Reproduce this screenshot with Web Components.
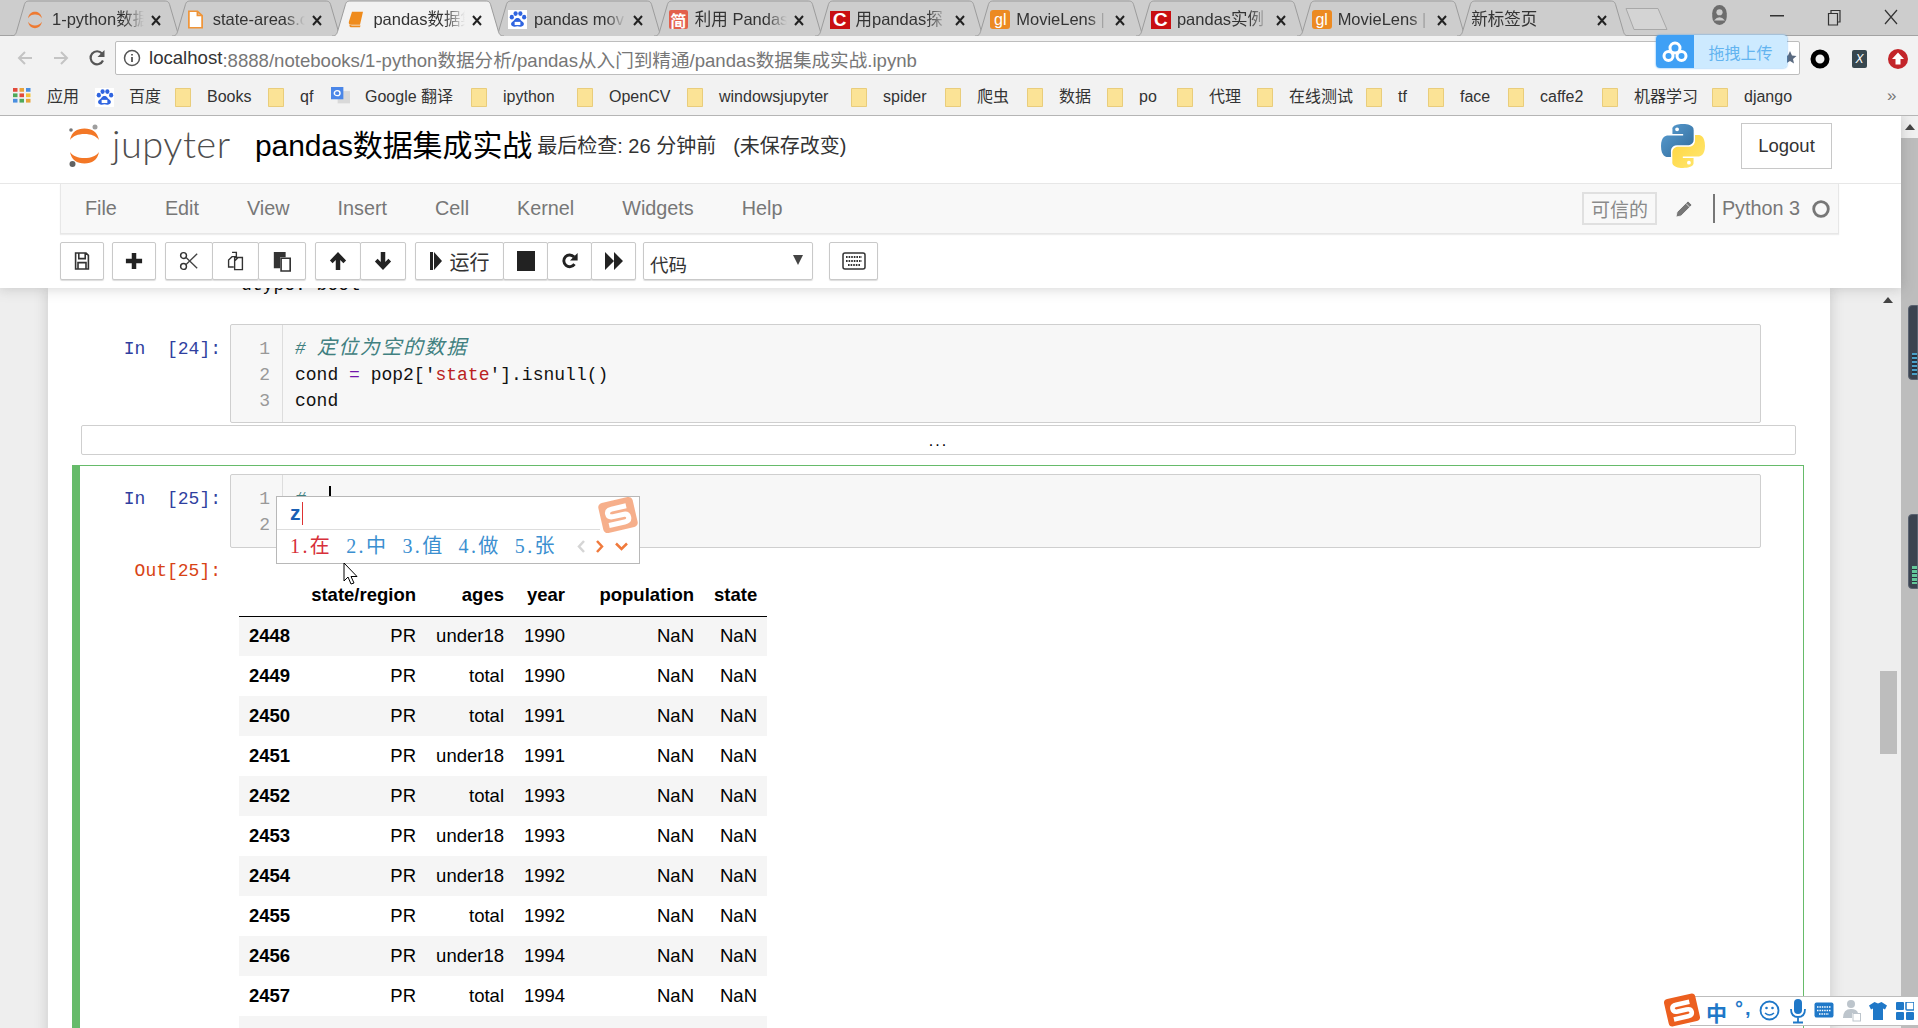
<!DOCTYPE html>
<html lang="zh"><head><meta charset="utf-8"><title>pandas数据集成实战</title>
<style>
html,body{margin:0;padding:0;background:#fff}
body{position:relative;width:1918px;height:1028px;overflow:hidden;font-family:"Liberation Sans","Noto Sans CJK SC",sans-serif;color:#000}
</style></head><body>
<c-tabs>
<c-tab icon="jup" label="1-python数据"></c-tab>
<c-tab icon="doc" label="state-areas.c"></c-tab>
<c-tab icon="book" label="pandas数据集" active></c-tab>
<c-tab icon="baidu" label="pandas mov"></c-tab>
<c-tab icon="jian" label="利用 Pandas"></c-tab>
<c-tab icon="csdn" label="用pandas探"></c-tab>
<c-tab icon="gl" label="MovieLens |"></c-tab>
<c-tab icon="csdn" label="pandas实例"></c-tab>
<c-tab icon="gl" label="MovieLens |"></c-tab>
<c-tab label="新标签页"></c-tab>
</c-tabs>
<c-toolbar></c-toolbar>
<c-bookmarks>
<c-bm w="82" icon="apps">应用</c-bm><c-bm w="80" icon="baidu">百度</c-bm><c-bm w="93">Books</c-bm><c-bm w="63">qf</c-bm><c-bm w="140" icon="gt">Google 翻译</c-bm><c-bm w="106">ipython</c-bm><c-bm w="110">OpenCV</c-bm><c-bm w="164">windowsjupyter</c-bm><c-bm w="94">spider</c-bm><c-bm w="82">爬虫</c-bm><c-bm w="80">数据</c-bm><c-bm w="70">po</c-bm><c-bm w="80">代理</c-bm><c-bm w="109">在线测试</c-bm><c-bm w="62">tf</c-bm><c-bm w="80">face</c-bm><c-bm w="94">caffe2</c-bm><c-bm w="110">机器学习</c-bm><c-bm w="179">django</c-bm><span style="color:#777;font-size:17px">»</span>
</c-bookmarks>
<nb-page>
<nb-header></nb-header>
<nb-scroll>
<nb-cell n="24" style="height:99px">
<code-line>1|<i class="c">#</i> <i class="c z">定位为空的数据</i></code-line>
<code-line>2|cond <b class="o">=</b> pop2['<b class="s">state</b>'].isnull()</code-line>
<code-line>3|cond</code-line>
</nb-cell>
<nb-ellipsis>...</nb-ellipsis>
<nb-cell n="25" selected>
<code-line>1|<i class="c">#</i></code-line>
<code-line>2|</code-line>
<nb-table slot="output"></nb-table>
</nb-cell>
</nb-scroll>
</nb-page>
<ime-popup></ime-popup>
<ime-bar></ime-bar>
<mouse-arrow></mouse-arrow>
<script>
const SANS='"Liberation Sans","Noto Sans CJK SC",sans-serif';
const MONO='"Liberation Mono","Noto Sans CJK SC",monospace';
const sLogo=(c,w,h)=>`<svg width="${w}" height="${h}" viewBox="0 0 40 36"><g transform="rotate(-13 20 18)"><rect x="4" y="4" width="32" height="28" rx="4" fill="${c}"/><path d="M29 11.500H15.500Q11 11.500 11 15T15.500 18.500H24.500Q29 18.500 29 22T24.500 25.500H10" stroke="#fff" stroke-width="4.600" fill="none"/></g></svg>`;
const IC={
jup:`<svg viewBox="0 0 18 22" width="18" height="20" preserveAspectRatio="none"><path d="M2 9C3 4 6 2 9 2s6 2 7 7C14 6 12 5 9 5S4 6 2 9ZM2 13c1 5 4 7 7 7s6-2 7-7c-2 3-4 4-7 4s-5-1-7-4Z" fill="#ee7a32"/></svg>`,
doc:`<svg viewBox="0 0 18 24" width="17" height="19" preserveAspectRatio="none"><path d="M2 1.500H11L16 7V22.500H2ZM11 1.500V7H16" fill="#fff" stroke="#f09436" stroke-width="1.800"/></svg>`,
book:`<svg viewBox="0 0 18 22" width="18" height="19" preserveAspectRatio="none"><path d="M5 2H16L13 17H4Q1 17 2 13ZM2.500 17Q2 20 5 20H13L13.500 18H5" fill="#ef8b1c"/></svg>`,
baidu:`<svg viewBox="0 0 20 24" width="19" height="19" preserveAspectRatio="none"><rect width="20" height="24" fill="#fff"/><g fill="#2f64e0"><ellipse cx="4" cy="9" rx="2.200" ry="3"/><ellipse cx="8" cy="4.500" rx="2.200" ry="3"/><ellipse cx="13" cy="4.500" rx="2.200" ry="3"/><ellipse cx="17" cy="9" rx="2.200" ry="3"/><path d="M10 10c3 0 3 3 5 4.500 3 2 2 6.500-2 6.500-1 0-2-.5-3-.5s-2 .5-3 .5c-4 0-5-4.500-2-6.500 2-1.500 2-4.500 5-4.500Z"/></g><rect x="7" y="15" width="6" height="4" fill="#fff"/></svg>`,
jian:`<span style="display:flex;width:19px;height:19px;background:#e2604c;border-radius:2px;color:#fff;font:bold 16px 'Noto Sans CJK SC',sans-serif;align-items:center;justify-content:center">简</span>`,
csdn:`<span style="display:flex;width:20px;height:18px;margin-top:1px;background:#c90f12;color:#fff;font:bold 19px 'Liberation Sans',sans-serif;align-items:center;justify-content:center">C</span>`,
gl:`<span style="display:flex;width:20px;height:19px;background:#ec8a22;border-radius:3px;color:#fff;font:16px 'Liberation Sans',sans-serif;align-items:center;justify-content:center">gl</span>`,
apps:`<svg viewBox="0 0 18 18" width="18" height="15" preserveAspectRatio="none" style="margin-top:-4px"><g><rect width="4.500" height="4.500" fill="#e24a3b"/><rect x="6.500" width="4.500" height="4.500" fill="#e8a33a"/><rect x="13" width="4.500" height="4.500" fill="#4a8fe0"/><rect y="6.500" width="4.500" height="4.500" fill="#4fa95a"/><rect x="6.500" y="6.500" width="4.500" height="4.500" fill="#e24a3b"/><rect x="13" y="6.500" width="4.500" height="4.500" fill="#f2c33b"/><rect y="13" width="4.500" height="4.500" fill="#4a8fe0"/><rect x="6.500" y="13" width="4.500" height="4.500" fill="#4fa95a"/><rect x="13" y="13" width="4.500" height="4.500" fill="#e8a33a"/></g></svg>`,
gt:`<svg viewBox="0 0 20 22" width="19" height="18" preserveAspectRatio="none" style="margin-top:-3px"><rect x="7" y="5" width="13" height="15" fill="#d9d9d9"/><rect width="13" height="15" fill="#4a86e8"/><circle cx="6.500" cy="7.500" r="3" fill="none" stroke="#fff" stroke-width="1.500"/></svg>`,
folder:`<svg viewBox="0 0 16 20" width="16" height="19" preserveAspectRatio="none"><path d="M.5.5H15.500V19.500H.5Z" fill="#fbe396" stroke="#e8cc78"/></svg>`,
save:`<svg viewBox="0 0 20 24" width="16" height="20"><path d="M2 2H15L18 5V22H2Z M6 2V9H14V2 M5 22V14H15V22" fill="none" stroke="#333" stroke-width="2"/></svg>`,
plus:`<svg viewBox="0 0 20 20" width="18" height="18"><path d="M7.500 1H12.500V7.500H19V12.500H12.500V19H7.500V12.500H1V7.500H7.500Z" fill="#222"/></svg>`,
cut:`<svg viewBox="0 0 22 24" width="20" height="22"><circle cx="5" cy="6" r="3.200" fill="none" stroke="#333" stroke-width="1.600"/><circle cx="5" cy="18" r="3.200" fill="none" stroke="#333" stroke-width="1.600"/><path d="M7.500 8L20 20M7.500 16L20 4" stroke="#444" stroke-width="1.500"/></svg>`,
copy:`<svg viewBox="0 0 22 24" width="19" height="22"><path d="M7 2H12V7H7L3 11V19H9M12 2V6" fill="none" stroke="#333" stroke-width="1.600"/><path d="M10 8H19V22H10Z M10 12L14 8" fill="#fff" stroke="#333" stroke-width="1.600"/></svg>`,
paste:`<svg viewBox="0 0 22 24" width="20" height="22"><path d="M2 2H15V8H9V20H2Z" fill="#333"/><path d="M10 9H20V23H10Z" fill="#fff" stroke="#333" stroke-width="1.800"/></svg>`,
up:`<svg viewBox="0 0 20 22" width="18" height="20"><path d="M10 1L19 10.500L16 13.500L12.500 10V21H7.500V10L4 13.500L1 10.500Z" fill="#222"/></svg>`,
down:`<svg viewBox="0 0 20 22" width="18" height="20"><path d="M10 21L19 11.500L16 8.500L12.500 12V1H7.500V12L4 8.500L1 11.500Z" fill="#222"/></svg>`,
step:`<svg viewBox="0 0 12 20" width="12" height="20"><path d="M0 1H3V19H0ZM4 1L12 10L4 19Z" fill="#222"/></svg>`,
stop:`<svg viewBox="0 0 18 20" width="18" height="20"><rect width="18" height="20" fill="#222"/></svg>`,
redo:`<svg viewBox="0 0 20 20" width="18" height="18"><path d="M15 13.500A6.500 6.500 0 1 1 14.500 5.500" fill="none" stroke="#222" stroke-width="3.200"/><path d="M18.500 1V9.500H10Z" fill="#222"/></svg>`,
ff:`<svg viewBox="0 0 18 20" width="18" height="20"><path d="M0 1L9 10L0 19ZM9 1L18 10L9 19Z" fill="#222"/></svg>`,
kbd:`<svg viewBox="0 0 24 18" width="24" height="18"><rect x="1" y="1" width="22" height="16" rx="2" fill="#fff" stroke="#333" stroke-width="1.500"/><path d="M4 5H20M4 9H20M6 13H18" stroke="#333" stroke-width="2" stroke-dasharray="1.600 1"/></svg>`
};
function def(name,css,html){customElements.define(name,class extends HTMLElement{connectedCallback(){if(this.shadowRoot)return;const s=this.attachShadow({mode:'open'});s.innerHTML=`<style>${css}</style>`+(typeof html==='function'?html(this):html)}})}

def('c-tabs',`:host{display:flex;height:36px;background:#cdcdcd;padding-left:11px;box-sizing:border-box;position:relative}
.line{position:absolute;left:0;right:0;bottom:0;height:1px;background:#a3a3a3}
.new{position:absolute;left:1625px;top:7px}`,
`<div class="line"></div><slot></slot>
<svg class="new" width="45" height="24" viewBox="0 0 45 24"><path d="M1 1.500H33L42 22.500H9Z" fill="#d4d4d4" stroke="#a8a8a8"/></svg>
<svg style="position:absolute;left:1711px;top:5px" width="17" height="20" viewBox="0 0 18 22"><path d="M9 0A8 9 0 0 1 17 9V13A8 9 0 0 1 1 13V9A8 9 0 0 1 9 0Z" fill="#6d6d6d"/><circle cx="9" cy="8" r="3.400" fill="#cdcdcd"/><path d="M3 17Q9 10 15 17Z" fill="#cdcdcd"/></svg>
<svg style="position:absolute;left:1770px;top:15px" width="14" height="2"><rect width="14" height="1.500" fill="#333"/></svg>
<svg style="position:absolute;left:1827px;top:9px" width="14" height="17" viewBox="0 0 14 17"><path d="M1.500 4.500H10.500V16H1.500ZM4 4.500V1.500H13V13H10.500" fill="none" stroke="#333" stroke-width="1.200"/></svg>
<svg style="position:absolute;left:1884px;top:9px" width="14" height="16" viewBox="0 0 14 16"><path d="M1 1L13 15M13 1L1 15" stroke="#333" stroke-width="1.200"/></svg>`);

def('c-tab',`:host{display:block;position:relative;width:172px;height:36px;margin-right:-11.300px;flex:none}
:host([active]){z-index:3}
svg.bg{position:absolute;left:0;top:0}
.ic{position:absolute;left:15px;top:10px;display:flex}
.lb{position:absolute;left:41px;top:0;width:92px;height:35px;line-height:38px;font-size:16.500px;color:#333;white-space:nowrap;overflow:hidden;-webkit-mask-image:linear-gradient(90deg,#000 78%,transparent)}
.x{position:absolute;left:140px;top:15px}`,
t=>{const a=t.hasAttribute('active'),i=t.getAttribute('icon');return `<svg class="bg" width="172" height="36"><path d="M0 36C4 36 5 34 6 30L13 6C14 2 15 1 19 1H153C157 1 158 2 159 6L166 30C167 34 168 36 172 36" fill="${a?'#f2f2f2':'#cdcdcd'}" stroke="#9c9c9c"/></svg>
${i?`<span class="ic">${IC[i]}</span>`:''}<span class="lb" style="${i?'':'left:14px'}">${t.getAttribute('label')}</span>
<svg class="x" width="10" height="11" viewBox="0 0 10 11"><path d="M1 1L9 10M9 1L1 10" stroke="#222" stroke-width="2"/></svg>`});

def('c-toolbar',`:host{display:flex;align-items:flex-start;height:46px;background:#f2f2f2;position:relative;box-sizing:border-box;padding:5px 0 0 16px}
.nav{display:flex;align-items:center;gap:18px;height:34px;width:99px;flex:none}
.omni{box-sizing:border-box;width:1685px;height:34px;background:#fff;border:1px solid #bdbdbd;border-radius:2px;display:flex;align-items:center;padding-left:7px;font-size:18.600px;color:#777;white-space:nowrap}
.omni b{font-weight:400;color:#333}
.info{margin-right:8px;display:flex}
.ex{position:absolute;top:14px}
.pan{position:absolute;left:1656px;top:-1px;width:131px;height:33px;border-radius:4px;display:flex;overflow:hidden;box-shadow:0 0 2px #3fa0f5;z-index:2}
.pan .l{width:38px;background:#3fa0f5;display:flex;align-items:center;justify-content:center}
.pan .r{flex:1;background:#cdeaff;color:#63b4f0;font-size:16px;display:flex;align-items:center;justify-content:center}`,
`<div class="nav">
<svg width="18" height="18" viewBox="0 0 18 18"><path d="M16 9H3M9 3L3 9L9 15" fill="none" stroke="#c4c4c4" stroke-width="2"/></svg>
<svg width="18" height="18" viewBox="0 0 18 18"><path d="M2 9H15M9 3L15 9L9 15" fill="none" stroke="#c4c4c4" stroke-width="2"/></svg>
<svg width="18" height="18" viewBox="0 0 18 18"><path d="M15 11.500A6.500 6.500 0 1 1 14 4.500" fill="none" stroke="#555" stroke-width="2.200"/><path d="M16.500 1V8H9.500Z" fill="#555"/></svg>
</div>
<div class="omni"><span class="info"><svg width="18" height="18" viewBox="0 0 18 18"><circle cx="9" cy="9" r="7.500" fill="none" stroke="#555" stroke-width="1.500"/><path d="M9 8V13M9 5V6.500" stroke="#555" stroke-width="1.800"/></svg></span><b>localhost</b>:8888/notebooks/1-python数据分析/pandas从入门到精通/pandas数据集成实战.ipynb</div>
<svg class="ex" style="left:1783px" width="14" height="14" viewBox="0 0 14 14"><path d="M7 1L9 5.500L13.500 6L10 9L11 13.500L7 11L3 13.500L4 9L.5 6L5 5.500Z" fill="#5a6a80"/></svg>
<svg class="ex" style="left:1810px;top:13px" width="20" height="20"><circle cx="10" cy="10" r="7" fill="none" stroke="#000" stroke-width="5"/></svg>
<span class="ex" style="left:1852px;top:14px;width:15px;height:18px;background:#37474f;border-radius:2px;color:#fff;font-size:12px;text-align:center;line-height:18px;font-style:italic">X</span>
<svg class="ex" style="left:1888px;top:13px" width="20" height="20" viewBox="0 0 20 20"><circle cx="10" cy="10" r="10" fill="#c3252a"/><path d="M10 3.500L16 10H12.500V15.500H7.500V10H4Z" fill="#fff"/></svg>
<div class="pan"><span class="l"><svg width="26" height="22" viewBox="0 0 26 22"><g fill="none" stroke="#fff" stroke-width="3"><circle cx="13" cy="7" r="5"/><circle cx="6.500" cy="15" r="4.500"/><circle cx="19.500" cy="15" r="4.500"/></g></svg></span><span class="r">拖拽上传</span></div>`);

def('c-bookmarks',`:host{display:flex;align-items:center;height:34px;box-sizing:border-box;background:#f2f2f2;border-bottom:1px solid #b5b5b5;padding:0 0 2px 13px;position:relative}
::slotted(span){position:absolute;left:1887px;top:4px}`,`<slot></slot>`);
def('c-bm',`:host{display:flex;align-items:center;flex:none;height:26px;font-size:16px;line-height:24px;color:#333;white-space:nowrap}
.i{width:32px;flex:none;display:flex;align-items:center}
.t{display:block;margin-top:-2px}`,
t=>{t.style.width=t.getAttribute('w')+'px';return `<span class="i" style="${t.getAttribute('icon')?'width:34px':''}">${IC[t.getAttribute('icon')||'folder']}</span><span class="t"><slot></slot></span>`});

def('nb-page',`:host{display:grid;grid-template-columns:1901px 17px;grid-template-rows:172px 740px;height:912px;position:relative;overflow:hidden}
.sb{grid-column:2;grid-row:1/3;background:#bdbdbd;position:relative}
.tp{height:22px;background:#f1f1f1;display:flex;align-items:center;justify-content:center}
.m{position:absolute;left:7px;width:10px;height:75px;box-sizing:border-box;border-radius:4px 0 0 4px;background:#3b4350;border:1px solid #5a6270}
.m i{position:absolute;left:3px;right:0;bottom:4px;height:22px;background:repeating-linear-gradient(#4aa0c8 0 2px,#27303c 2px 4px)}
.m.g i{height:18px;background:repeating-linear-gradient(#63c79a 0 3px,#27303c 3px 4px)}`,
`<slot></slot><div class="sb"><div class="tp"><svg width="10" height="6"><path d="M5 0L10 6H0Z" fill="#444"/></svg></div><div class="m" style="top:189px"><i></i></div><div class="m g" style="top:398px"><i></i></div></div>`);

def('nb-header',`:host{display:block;grid-column:1;grid-row:1;background:#fff;position:relative;z-index:3;box-shadow:0 0 12px 1px rgba(87,87,87,.25);font-family:${SANS}}
.top{height:68px;display:flex;align-items:center;padding:0 69px 8px 68px;border-bottom:1px solid #e7e7e7;box-sizing:border-box}
.jt{font:300 38px Lato,sans-serif;color:#4e4e4e;margin:0 0 6px 11px;width:143px;flex:none;letter-spacing:.5px}
.title{font-size:30px;color:#000;white-space:nowrap;margin-bottom:5px;letter-spacing:-.1px}
.ck{font-size:20px;color:#333;margin:0 0 3px 5px;white-space:nowrap}
.ck span{margin-left:17px}
.sp{flex:1}
.logout{box-sizing:border-box;width:91px;height:46px;border:1.500px solid #c8c8c8;margin-left:36px;display:flex;align-items:center;justify-content:center;font-size:18.500px;color:#333}
.menu{margin:0 62px 0 60px;height:50px;box-sizing:border-box;background:#f8f8f8;border:1px solid #e7e7e7;border-top:0;display:flex;align-items:center;font-size:19.800px;color:#777;position:relative;box-shadow:0 1px 1px #eee}
.menu .it{padding:0 24px}
.trust{box-sizing:border-box;height:33px;width:75px;border:2px solid #e0e0e0;display:flex;align-items:center;justify-content:center;font-size:19px;color:#8a8a8a;margin-right:18px}
.tb{display:flex;padding:8px 0 0 60px;height:54px;box-sizing:border-box;align-items:flex-start}
.g{display:flex;margin-right:var(--m,9px)}
.b{box-sizing:border-box;height:38px;border:1.500px solid #c9c9c9;background:#fff;display:flex;align-items:center;justify-content:center;color:#333;font-size:20px;margin-right:-1px;box-shadow:0 1px 1px #ddd;border-radius:2px}
.b span{margin-left:8px}
.sel{box-sizing:border-box;width:170px;height:38px;border:1.500px solid #c9c9c9;border-radius:2px;display:flex;align-items:center;justify-content:space-between;padding:5px 9px 0 6px;font-size:18.500px;color:#333;margin-right:16px;box-shadow:0 1px 1px #ddd}
.sel svg{margin-top:-7px}`,
`<div class="top">
<svg width="33" height="44" viewBox="0 0 33 44" style="flex:none"><path d="M2 16C3.500 8 9 4.500 16.500 4.500S29.500 8 31 16C28 12 23 10 16.500 10S5 12 2 16ZM2 28C3.500 36 9 39.500 16.500 39.500S29.500 36 31 28C28 32 23 34 16.500 34S5 32 2 28Z" fill="#f37726"/><circle cx="3" cy="6" r="1.800" fill="#767677"/><circle cx="27" cy="3" r="2.500" fill="#9e9e9e"/><circle cx="4.500" cy="40" r="3" fill="#616262"/></svg>
<span class="jt">jupyter</span><span class="title">pandas数据集成实战</span><span class="ck">最后检查: 26 分钟前<span>(未保存改变)</span></span><span class="sp"></span>
<svg width="44" height="44" viewBox="0 0 110 110" style="flex:none"><defs><linearGradient id="a" x1="0" y1="0" x2="1" y2="1"><stop offset="0" stop-color="#5a9fd4"/><stop offset="1" stop-color="#306998"/></linearGradient><linearGradient id="b" x1="0" y1="0" x2="1" y2="1"><stop offset="0" stop-color="#ffe873"/><stop offset="1" stop-color="#ffd43b"/></linearGradient></defs><path fill="url(#a)" d="M54.900 0C26.800 0 28.600 12.200 28.600 12.200V24.800H55.400V28.600H17.900S0 26.600 0 54.900S15.600 82.200 15.600 82.200H24.900V69S24.400 53.400 40.300 53.400H66.800S81.700 53.600 81.700 39V14.900S84 0 54.900 0ZM40.200 8.500A4.800 4.800 0 1 1 40.200 18.100A4.800 4.800 0 0 1 40.200 8.500Z" fill-rule="evenodd"/><path fill="url(#b)" transform="rotate(180 55 55)" d="M54.900 0C26.800 0 28.600 12.200 28.600 12.200V24.800H55.400V28.600H17.900S0 26.600 0 54.900S15.600 82.200 15.600 82.200H24.900V69S24.400 53.400 40.300 53.400H66.800S81.700 53.600 81.700 39V14.900S84 0 54.900 0ZM40.200 8.500A4.800 4.800 0 1 1 40.200 18.100A4.800 4.800 0 0 1 40.200 8.500Z" fill-rule="evenodd"/></svg>
<span class="logout">Logout</span></div>
<div class="menu"><span class="it">File</span><span class="it">Edit</span><span class="it">View</span><span class="it">Insert</span><span class="it">Cell</span><span class="it">Kernel</span><span class="it">Widgets</span><span class="it">Help</span><span class="sp"></span>
<span class="trust">可信的</span>
<svg width="18" height="18" viewBox="0 0 18 18" style="margin-right:20px"><path d="M13 1L17 5L6 16L1 17L2 12ZM11 3.500L14.500 7" fill="#777" stroke="#f8f8f8" stroke-width=".8"/></svg>
<span style="width:2px;height:29px;background:#777;margin-right:7px"></span><span>Python 3</span>
<svg width="18" height="18" style="margin:0 8px 0 12px"><circle cx="9" cy="9" r="7.300" fill="none" stroke="#777" stroke-width="2.800"/></svg></div>
<div class="tb">
<div class="g"><div class="b" style="width:44px">${IC.save}</div></div>
<div class="g" style="--m:10px"><div class="b" style="width:44px">${IC.plus}</div></div>
<div class="g" style="--m:10px"><div class="b" style="width:48px">${IC.cut}</div><div class="b" style="width:47px">${IC.copy}</div><div class="b" style="width:48px">${IC.paste}</div></div>
<div class="g" style="--m:10px"><div class="b" style="width:46px">${IC.up}</div><div class="b" style="width:46px">${IC.down}</div></div>
<div class="g" style="--m:8px"><div class="b" style="width:89px">${IC.step}<span>运行</span></div><div class="b" style="width:45px">${IC.stop}</div><div class="b" style="width:45px">${IC.redo}</div><div class="b" style="width:45px">${IC.ff}</div></div>
<div class="sel">代码<svg width="10" height="12"><path d="M0 1H10L5 11Z" fill="#444"/></svg></div>
<div class="b" style="width:49px">${IC.kbd}</div>
</div>`);

def('nb-scroll',`:host{display:block;grid-column:1;grid-row:2;background:#eee;overflow:hidden;position:relative}
.w{margin-left:48px;width:1782px;min-height:900px;background:#fff;box-shadow:0 0 12px 1px rgba(87,87,87,.22);padding:0 26px 0 24px;box-sizing:border-box}
.dt{height:36px;overflow:hidden;padding-left:169px}
.dt span{display:block;margin-top:-16px;font:18px/26px ${MONO};color:#000;white-space:pre}
.arrow{position:absolute;left:1883px;top:9px}
.th{position:absolute;left:1880px;top:383px;width:17px;height:83px;background:#bdbdbd}`,
`<div class="w"><div class="dt"><span>dtype: bool</span></div><slot></slot></div>
<svg class="arrow" width="10" height="6"><path d="M5 0L10 6H0Z" fill="#444"/></svg><div class="th"></div>`);

def('nb-cell',`:host{display:grid;grid-template-columns:158px 1fr;padding-right:43px;box-sizing:content-box;border:0 solid transparent;font:18px/26px ${MONO}}
:host([selected]){border:1.500px solid #66bb6a;border-left:8px solid #66bb6a;grid-template-columns:150px 1fr;margin-top:10px;padding-top:8px;padding-right:42px}
.p{text-align:right;padding:12px 9px 0 0;color:#303f9f;white-space:pre}
.in{box-sizing:border-box;border:1.500px solid #cfcfcf;border-radius:2px;background:#f7f7f7;padding:10.500px 0 9px;position:relative;min-height:74px}
.gut{position:absolute;left:0;top:0;bottom:0;width:51px;border-right:1.500px solid #ddd}
.out{grid-column:1;text-align:right;padding:10px 9px 0 0;color:#d84315;white-space:pre}
.t{padding-top:28px;margin-left:9px}`,
t=>{const n=t.getAttribute('n');const s=t.hasAttribute('selected');return `<div class="p">In  [${n}]:</div><div class="in"><div class="gut"></div><slot></slot></div>${s?`<div class="out">Out[${n}]:</div><div class="t"><slot name="output"></slot></div>`:''}`});

customElements.define('code-line',class extends HTMLElement{connectedCallback(){if(this.shadowRoot)return;
const [n,...r]=this.innerHTML.split('|');const code=r.join('|');this.innerHTML='';
const s=this.attachShadow({mode:'open'});
s.innerHTML=`<style>:host{display:flex;height:26px;font:18px/26px ${MONO};color:#111;white-space:pre}
.n{width:39px;text-align:right;color:#999;margin-right:25px;flex:none}
.c{color:#408080;font-style:italic}.z{font-size:20px;letter-spacing:1.600px}.o{color:#7216ab;font-weight:400}.s{color:#ba2121;font-weight:400}</style><span class="n">${n}</span><span>${code}</span>`}});

def('nb-ellipsis',`:host{display:block;box-sizing:border-box;margin:2px 8px 0 9px;height:30px;border:1.500px solid #cfcfcf;border-radius:2px;background:#fff;text-align:center;font:16px/30px ${SANS};color:#000;letter-spacing:2px}`,`<slot></slot>`);

const ROWS=[[2448,'under18',1990],[2449,'total',1990],[2450,'total',1991],[2451,'under18',1991],[2452,'total',1993],[2453,'under18',1993],[2454,'under18',1992],[2455,'total',1992],[2456,'under18',1994],[2457,'total',1994]];
def('nb-table',`:host{display:block;font:18.500px ${SANS};color:#000}
table{border-collapse:collapse;table-layout:fixed;width:528px}
th,td{height:40px;padding:0 10px;text-align:right;box-sizing:border-box;white-space:nowrap}
thead th{border-bottom:1.500px solid #000;padding-bottom:2px}
tbody th{text-align:left}
tbody tr:nth-child(odd){background:#f5f5f5}`,
`<table><colgroup><col style="width:61px"><col style="width:126px"><col style="width:88px"><col style="width:61px"><col style="width:129px"><col style="width:63px"></colgroup>
<thead><tr><th></th><th>state/region</th><th>ages</th><th>year</th><th>population</th><th>state</th></tr></thead>
<tbody>${ROWS.map(r=>`<tr><th>${r[0]}</th><td>PR</td><td>${r[1]}</td><td>${r[2]}</td><td>NaN</td><td>NaN</td></tr>`).join('')}<tr><th></th><td></td><td></td><td></td><td></td><td></td></tr></tbody></table>`);

def('ime-popup',`:host{position:absolute;left:276px;top:496px;width:364px;height:68px;box-sizing:border-box;background:#fff;border:1px solid #b8b8b8;z-index:5;font-family:"Liberation Serif","Noto Sans CJK SC",serif}
.top{height:33px;margin-right:39px;border-bottom:1px solid #ddd;display:flex;align-items:center;padding-left:13px;box-sizing:border-box;font:bold 21px ${SANS};color:#1a5fb4}
.top i{display:block;width:1px;height:23px;background:#d33;margin-left:1px}
.s{position:absolute;right:-1px;top:-2px;opacity:.62}
.c{display:flex;height:29px;align-items:center;padding-left:13px;font-size:20px;color:#3b8fd0;letter-spacing:2.400px}
.c span{width:56.200px;flex:none;white-space:nowrap}
.c span:first-child{color:#d7303a}
.n{position:absolute;top:43px}`,
`<div class="top">z<i></i></div><span class="s">${sLogo('#f27f45',44,40)}</span>
<div class="c"><span>1.在</span><span>2.中</span><span>3.值</span><span>4.做</span><span>5.张</span></div>
<svg class="n" style="left:300px" width="9" height="13"><path d="M7 1L2 6.500L7 12" fill="none" stroke="#d5d5d5" stroke-width="2.500"/></svg>
<svg class="n" style="left:318px" width="9" height="13"><path d="M2 1L7 6.500L2 12" fill="none" stroke="#f07a3c" stroke-width="2.500"/></svg>
<svg class="n" style="left:338px;top:45px" width="13" height="9"><path d="M1 1.500L6.500 7L12 1.500" fill="none" stroke="#f07a3c" stroke-width="2.500"/></svg>`);

def('ime-bar',`:host{position:absolute;left:1690px;top:996px;width:228px;height:30px;box-sizing:border-box;background:#fff;border:1px solid #bdbdbd;border-width:1px 0;z-index:6}
.l{position:absolute;left:-28px;top:-5px}
.zh{position:absolute;left:16px;top:1px;font:bold 21px/28px "Noto Sans CJK SC",sans-serif;color:#1f78c8}
.dp{position:absolute;left:45px;top:-3px;font:bold 20px/28px ${SANS};color:#1f78c8;letter-spacing:2px;white-space:pre}
svg.a{position:absolute;top:3px}`,
`<span class="l">${sLogo('#ec5f1f',40,36)}</span><span class="zh">中</span><span class="dp">°,</span>
<svg class="a" style="left:69px" width="21" height="21" viewBox="0 0 21 21"><circle cx="10.500" cy="10.500" r="9" fill="none" stroke="#1f78c8" stroke-width="1.800"/><circle cx="7.500" cy="8" r="1.300" fill="#1f78c8"/><circle cx="13.500" cy="8" r="1.300" fill="#1f78c8"/><path d="M6 13Q10.500 17 15 13" fill="none" stroke="#1f78c8" stroke-width="1.500"/></svg>
<svg class="a" style="left:100px;top:1px" width="16" height="26" viewBox="0 0 16 26"><rect x="4" y="1" width="8" height="15" rx="4" fill="#1f78c8"/><path d="M1 11Q1 19 8 19Q15 19 15 11M8 19V24M3 24.500H13" fill="none" stroke="#1f78c8" stroke-width="1.800"/></svg>
<svg class="a" style="left:124px;top:5px" width="20" height="16" viewBox="0 0 20 16"><rect x=".5" y=".5" width="19" height="15" rx="2" fill="#1f78c8"/><path d="M3 5H17M3 8.500H17M5 12H15" stroke="#fff" stroke-width="1.600" stroke-dasharray="1.500 .9"/></svg>
<svg class="a" style="left:153px;top:2px" width="18" height="23" viewBox="0 0 18 23"><circle cx="8" cy="5" r="4" fill="#bdc5cc"/><path d="M0 19Q0 10 8 10Q14 10 15 14H9V19Z" fill="#bdc5cc"/><rect x="10" y="14.500" width="7.500" height="7.500" fill="#fff" stroke="#bdc5cc"/></svg>
<svg class="a" style="left:179px;top:5px" width="18" height="18" viewBox="0 0 18 18"><path d="M5.500 0L9 1.500L12.500 0L18 3.500L16 7.500L14 6.500V18H4V6.500L2 7.500L0 3.500Z" fill="#1f78c8"/></svg>
<svg class="a" style="left:206px;top:5px" width="18" height="18" viewBox="0 0 18 18"><rect width="8" height="8" rx="1" fill="#1f78c8"/><rect x="10" width="8" height="8" rx="1" fill="#fff" stroke="#1f78c8" stroke-width="1.500"/><rect y="10" width="8" height="8" rx="1" fill="#1f78c8"/><rect x="10" y="10" width="8" height="8" rx="1" fill="#1f78c8"/></svg>`);

def('mouse-arrow',`:host{position:absolute;left:343px;top:562px;z-index:7;display:block;width:16px;height:24px}
.c{position:absolute;left:-14px;top:-76px;width:1.500px;height:10px;background:#000}`,
`<i class="c"></i><svg width="16" height="24" viewBox="0 0 16 24"><path d="M1 1V19L5 15L8 22L11 21L8 14.500H14Z" fill="#fff" stroke="#000" stroke-width="1"/></svg>`);
</script>
</body></html>
